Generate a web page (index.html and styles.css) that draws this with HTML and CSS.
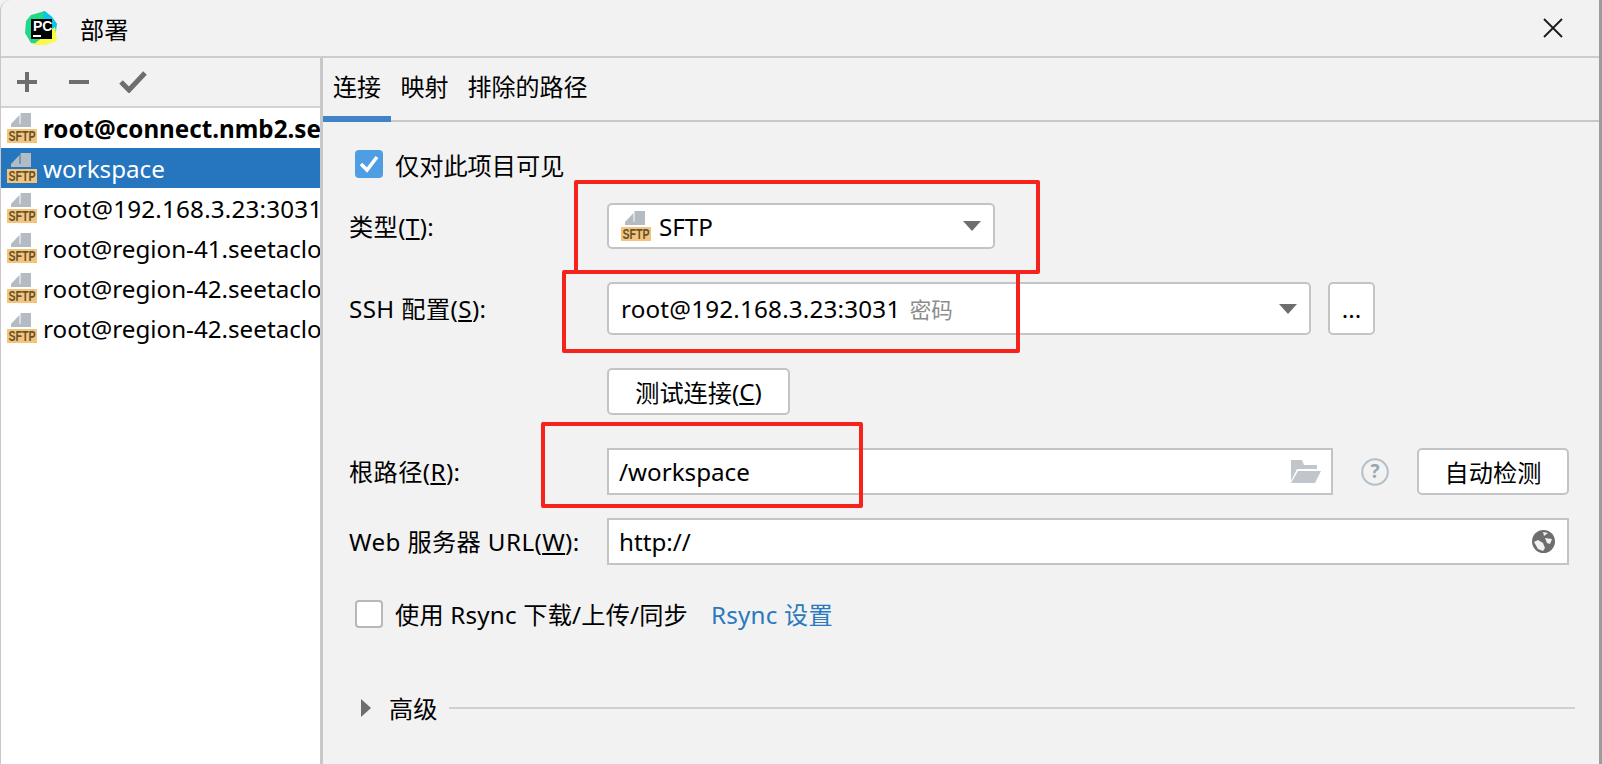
FILE: index.html
```html
<!DOCTYPE html>
<html lang="zh-CN">
<head>
    <meta charset="UTF-8">
    <title>部署</title>
    <link rel="stylesheet" href="styles.css">
</head>
<body>
    <svg width="0" height="0" class="defs">
        <symbol id="sftp" viewBox="0 0 30 30">
            <path d="M4 14 V11 L12.5 2 V11 H13.5 V0 H24 V14 Z" fill="#b4bcc3"/>
            <rect x="0" y="16" width="30" height="14" fill="#f4c47c"/>
            <text x="15" y="28" text-anchor="middle" textLength="27" lengthAdjust="spacingAndGlyphs" class="sftp-text">SFTP</text>
        </symbol>
    </svg>

    <div class="window">
        <div class="titlebar">
            <svg class="logo" width="32" height="34" viewBox="0 0 32 34">
                <polygon points="6,4 20,0 27,6 32,13 30,27 20,34 6,32 0,22 1,10" fill="#21d789"/>
                <polygon points="18,0 26,5 32,13 29,20 20,12" fill="#07c3f2"/>
                <polygon points="8,34 30,16 32,30 20,34" fill="#fcf84a"/>
                <rect x="6" y="8" width="21" height="20" fill="#000"/>
                <text x="8" y="20" class="logo-text">PC</text>
                <rect x="8" y="24" width="8" height="2" fill="#fff"/>
            </svg>
            <span class="title">部署</span>
            <svg class="close" width="20" height="20" viewBox="0 0 20 20">
                <path d="M1 1 L19 19 M19 1 L1 19" stroke="#1a1a1a" stroke-width="1.8" fill="none"/>
            </svg>
        </div>

        <div class="main">
            <div class="sidebar">
                <div class="toolbar">
                    <svg width="20" height="20" viewBox="0 0 20 20"><path d="M0 10 H20 M10 0 V20" stroke="#6e6e6e" stroke-width="4"/></svg>
                    <svg width="20" height="20" viewBox="0 0 20 20"><path d="M0 10 H20" stroke="#6e6e6e" stroke-width="4"/></svg>
                    <svg class="tool-check" width="28" height="22" viewBox="0 0 28 22"><path d="M2 11 L10 19 L26 2" stroke="#6e6e6e" stroke-width="5" fill="none"/></svg>
                </div>
                <div class="server-list">
                    <div class="server bold"><svg class="icon"><use href="#sftp"/></svg><span>root@connect.nmb2.seetacloud.com:22</span></div>
                    <div class="server selected"><svg class="icon"><use href="#sftp"/></svg><span>workspace</span></div>
                    <div class="server"><svg class="icon"><use href="#sftp"/></svg><span class="ip">root@192.168.3.23:3031</span></div>
                    <div class="server"><svg class="icon"><use href="#sftp"/></svg><span>root@region-41.seetacloud.com:22</span></div>
                    <div class="server"><svg class="icon"><use href="#sftp"/></svg><span>root@region-42.seetacloud.com:22</span></div>
                    <div class="server"><svg class="icon"><use href="#sftp"/></svg><span>root@region-42.seetacloud.com:22</span></div>
                </div>
            </div>

            <div class="content">
                <div class="tabs">
                    <div class="tab active">连接</div>
                    <div class="tab">映射</div>
                    <div class="tab">排除的路径</div>
                </div>

                <div class="form">
                    <div class="check-row first">
                        <span class="checkbox checked">
                            <svg width="20" height="18" viewBox="0 0 20 18"><path d="M2 9 L8 15 L18 2" stroke="#fff" stroke-width="3.6" fill="none"/></svg>
                        </span>
                        <span>仅对此项目可见</span>
                    </div>

                    <div class="row row-type">
                        <label>类型(<u>T</u>):</label>
                        <div class="field select select-type">
                            <svg class="icon small"><use href="#sftp"/></svg>
                            <span class="grow">SFTP</span>
                            <span class="arrow"></span>
                        </div>
                    </div>

                    <div class="row row-ssh">
                        <label>SSH 配置(<u>S</u>):</label>
                        <div class="field select select-ssh">
                            <span class="grow"><span class="ip">root@192.168.3.23:3031</span> <span class="hint">密码</span></span>
                            <span class="arrow"></span>
                        </div>
                        <div class="field btn btn-more">...</div>
                    </div>

                    <div class="row row-test">
                        <label></label>
                        <div class="field btn btn-test">测试连接(<u>C</u>)</div>
                    </div>

                    <div class="row row-root">
                        <label>根路径(<u>R</u>):</label>
                        <div class="field input input-root">
                            <span class="grow">/workspace</span>
                            <svg width="30" height="23" viewBox="0 0 30 23"><path d="M0 21 L0 0 L11 0 L13 5 L26 5 L26 9 L6 9 Z" fill="#c0c6cb"/><path d="M7 11 L30 11 L24 23 L0 23 Z" fill="#c0c6cb"/></svg>
                        </div>
                        <svg class="help" width="28" height="28" viewBox="0 0 28 28">
                            <circle cx="14" cy="14" r="12.8" fill="none" stroke="#b4bfc7" stroke-width="2"/>
                            <text x="14" y="20" text-anchor="middle" class="help-text">?</text>
                        </svg>
                        <div class="field btn btn-detect">自动检测</div>
                    </div>

                    <div class="row row-url">
                        <label>Web 服务器 URL(<u>W</u>):</label>
                        <div class="field input input-url">
                            <span class="grow">http://</span>
                            <svg width="23" height="23" viewBox="0 0 23 23">
                                <circle cx="11.5" cy="11.5" r="11.5" fill="#6e6e6e"/>
                                <path d="M2 12 L6 10 L11 13 L13 18 L11 21 L6 19 Z M13 8 L20 9 L18 14 L15 13 Z M11 2 L16 3 L12 6 Z" fill="#f2f2f2"/>
                            </svg>
                        </div>
                    </div>

                    <div class="check-row rsync">
                        <span class="checkbox"></span>
                        <span class="rsync-label">使用 Rsync 下载/上传/同步</span>
                        <a class="link">Rsync 设置</a>
                    </div>

                    <div class="advanced">
                        <span class="triangle"></span>
                        <span>高级</span>
                        <span class="rule"></span>
                    </div>
                </div>
            </div>
        </div>
    </div>

    <!-- 标注框 -->
    <div class="mark mark-type"></div>
    <div class="mark mark-ssh"></div>
    <div class="mark mark-root"></div>
</body>
</html>
```

FILE: styles.css
```css
* {
    box-sizing: border-box;
}
html, body {
    margin: 0;
    height: 100%;
    overflow: hidden;
}
body {
    font-family: "Noto Sans", "Noto Sans CJK SC", sans-serif;
    font-size: 24.2px;
    color: #000;
    background: #f2f2f2;
    position: relative;
}
.defs {
    position: absolute;
}
.sftp-text {
    font-family: "Liberation Sans", sans-serif;
    font-size: 14px;
    font-weight: bold;
    fill: #65522f;
}
.window {
    height: 764px;
    display: flex;
    flex-direction: column;
    border-left: 1px solid #c8c8c8;
    border-right: 3px solid #9c9c9c;
    border-top-left-radius: 10px;
}
.titlebar {
    height: 58px;
    flex: none;
    display: flex;
    align-items: center;
    padding-left: 24px;
    padding-right: 36px;
    border-bottom: 2px solid #cdcdcd;
}
.logo {
    margin-top: -1px;
}
.logo-text {
    font-family: "Liberation Sans", sans-serif;
    font-size: 14px;
    font-weight: bold;
    fill: #fff;
}
.title {
    margin-left: 23px;
    flex: 1;
}
.main {
    flex: 1;
    display: flex;
    min-height: 0;
}
.sidebar {
    width: 322px;
    flex: none;
    border-right: 3px solid #c8c8c8;
    display: flex;
    flex-direction: column;
}
.toolbar {
    height: 50px;
    flex: none;
    display: flex;
    align-items: center;
    padding-left: 16px;
    gap: 32px;
    border-bottom: 2px solid #d2d2d2;
}
.tool-check {
    margin-left: -2px;
}
.server-list {
    flex: 1;
    background: #fff;
}
.server {
    height: 40px;
    display: flex;
    align-items: center;
    padding-left: 6px;
    white-space: nowrap;
    overflow: hidden;
}
.server.bold {
    font-weight: bold;
}
.server.selected {
    background: #2675bf;
    color: #fff;
}
.ip {
    letter-spacing: 0.2px;
}
.icon {
    width: 30px;
    height: 30px;
    flex: none;
    margin-right: 6px;
}
.content {
    flex: 1;
    display: flex;
    flex-direction: column;
    min-width: 0;
}
.tabs {
    height: 64px;
    flex: none;
    display: flex;
    border-bottom: 2px solid #c8c8c8;
}
.tab {
    padding: 0 9.5px;
    font-size: 24px;
    line-height: 58px;
}
.tab.active {
    padding: 0 10px;
    box-shadow: inset 0 -6px 0 #4083c9;
    height: 64px;
}
.form {
    padding-left: 26px;
    padding-right: 30px;
}
.check-row {
    display: flex;
    align-items: center;
    height: 28px;
    gap: 12px;
}
.check-row .checkbox {
    margin-left: 6px;
}
.check-row.first {
    margin-top: 28px;
}
.checkbox {
    width: 28px;
    height: 28px;
    flex: none;
    background: #fff;
    border: 2px solid #b8b8b8;
    border-radius: 4px;
    display: flex;
    align-items: center;
    justify-content: center;
}
.checkbox.checked {
    background: #4f9ee3;
    border-color: #4f9ee3;
}
.row {
    display: flex;
    align-items: center;
}
.row label {
    width: 258px;
    flex: none;
    margin-top: -2px;
    letter-spacing: 0.4px;
}
.row-type {
    margin-top: 25px;
}
.row-ssh {
    margin-top: 33px;
}
.row-test {
    margin-top: 33px;
}
.row-root {
    margin-top: 33px;
}
.row-url {
    margin-top: 23px;
}
.field {
    background: #fff;
    border: 2px solid #c4c4c4;
    height: 47px;
    display: flex;
    align-items: center;
}
.grow {
    flex: 1;
    white-space: nowrap;
}
.select {
    border-radius: 5px;
    padding: 0 12px 0 12px;
}
.select-type {
    width: 388px;
    height: 46px;
    padding-left: 12px;
}
.select-type .icon {
    margin-right: 8px;
}
.select-ssh {
    width: 704px;
    height: 53px;
}
.arrow {
    width: 0;
    height: 0;
    border-left: 9px solid transparent;
    border-right: 9px solid transparent;
    border-top: 10px solid #6e6e6e;
}
.hint {
    color: #8c8c8c;
    font-size: 21.5px;
    margin-left: 3px;
}
.btn {
    border-radius: 5px;
    justify-content: center;
}
.btn-more {
    width: 47px;
    height: 53px;
    margin-left: 17px;
}
.btn-test {
    width: 183px;
}
.input-root {
    width: 726px;
    padding: 0 10px 0 10px;
}
.input-url {
    flex: 1;
    padding: 0 12px 0 10px;
}
.help {
    margin-left: 28px;
}
.help-text {
    font-family: "Noto Sans", sans-serif;
    font-size: 19px;
    font-weight: bold;
    fill: #9aa7b0;
}
.btn-detect {
    width: 152px;
    margin-left: 28px;
}
.rsync {
    margin-top: 35px;
}
.rsync-label,
.link {
    margin-top: -2px;
    letter-spacing: 0.2px;
}
.link {
    color: #2a78bf;
    margin-left: 11px;
}
.advanced {
    display: flex;
    align-items: center;
    margin-top: 62px;
}
.triangle {
    width: 0;
    height: 0;
    margin-left: 12px;
    border-top: 9px solid transparent;
    border-bottom: 9px solid transparent;
    border-left: 10px solid #6e6e6e;
    margin-right: 18px;
}
.rule {
    flex: 1;
    height: 2px;
    background: #d0d0d0;
    margin-left: 12px;
    margin-right: -6px;
}
.mark {
    position: absolute;
    border: 4px solid #f5231c;
    border-radius: 2px;
}
.mark-type {
    left: 574px;
    top: 180px;
    width: 466px;
    height: 94px;
}
.mark-ssh {
    left: 562px;
    top: 270px;
    width: 458px;
    height: 83px;
}
.mark-root {
    left: 541px;
    top: 422px;
    width: 322px;
    height: 86px;
}
```
